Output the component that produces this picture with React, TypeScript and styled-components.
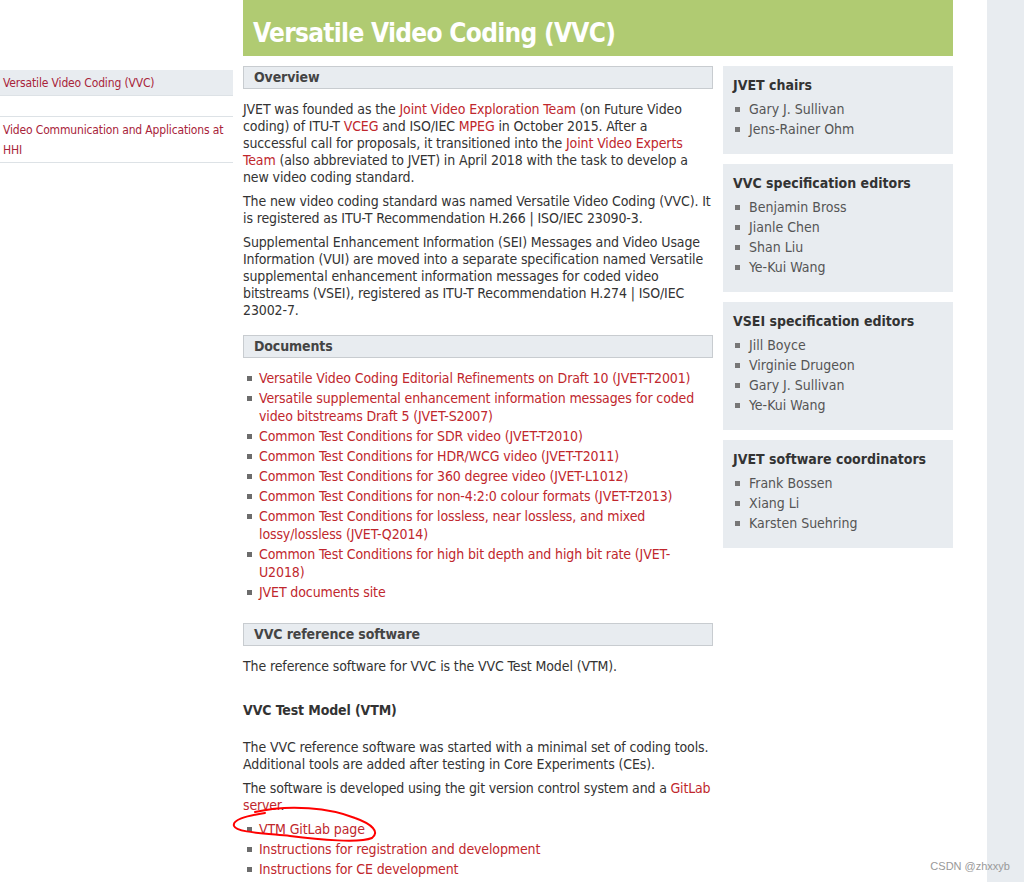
import React from "react";
import styled, { createGlobalStyle } from "styled-components";

const Global = createGlobalStyle`
  html, body { margin: 0; padding: 0; background: #fff; }
  body {
    font-family: "DejaVu Sans", Verdana, sans-serif;
    font-stretch: condensed;
    color: #333;
  }
`;

const Page = styled.div`
  position: relative;
  display: flex;
  width: 1024px;
  min-height: 882px;
  overflow: hidden;
`;

const LeftNav = styled.nav`
  width: 233px;
  margin-top: 70px;
  display: flex;
  flex-direction: column;
`;

const NavItem = styled.a<{ $active?: boolean; $gapTop?: number }>`
  display: block;
  font-size: 12px;
  line-height: 20px;
  letter-spacing: -0.15px;
  color: #a8243a;
  text-decoration: none;
  padding: 3px 3px 2px;
  background: ${(p) => (p.$active ? "#e8ecf0" : "transparent")};
  border-bottom: 1px solid #dde2e6;
  border-top: ${(p) => (p.$gapTop ? "1px solid #dde2e6" : "none")};
  margin-top: ${(p) => p.$gapTop || 0}px;
`;

const Main = styled.div`
  width: 710px;
  margin-left: 10px;
  display: flex;
  flex-direction: column;
`;

const Banner = styled.header`
  height: 56px;
  background: #b0cb72;
  display: flex;
  align-items: center;
  padding: 9px 10px 0;
  box-sizing: border-box;
`;

const Title = styled.h1`
  margin: 0;
  color: #fff;
  font-size: 26px;
  font-weight: bold;
  letter-spacing: -0.7px;
`;

const Columns = styled.div`
  display: flex;
  gap: 10px;
  margin-top: 10px;
`;

const Content = styled.div`
  width: 470px;
  display: flex;
  flex-direction: column;
  letter-spacing: -0.12px;
`;

const SectionHead = styled.h2<{ $top?: number }>`
  margin: ${(p) => p.$top || 0}px 0 0;
  height: 23px;
  box-sizing: border-box;
  background: #e8ecf0;
  border: 1px solid #c8ccd0;
  padding: 0 10px;
  font-size: 14px;
  line-height: 21px;
  font-weight: bold;
  color: #444;
`;

const Para = styled.p<{ $top?: number; $tight?: boolean }>`
  margin: ${(p) => p.$top ?? 7}px 0 0;
  font-size: 14px;
  line-height: 17px;
  color: #333;
  letter-spacing: ${(p) => (p.$tight ? "-0.17px" : "inherit")};
`;

const SubHead = styled.h3`
  margin: 27px 0 0;
  font-size: 14px;
  line-height: 17px;
  font-weight: bold;
  color: #333;
`;

const Link = styled.a`
  color: #c0272d;
  text-decoration: none;
`;

const List = styled.ul<{ $top?: number }>`
  list-style: none;
  margin: ${(p) => p.$top ?? 11}px 0 0;
  padding: 0;
`;

const Item = styled.li`
  position: relative;
  padding-left: 16px;
  font-size: 14px;
  line-height: 18px;
  margin-bottom: 2px;
  &::before {
    content: "";
    position: absolute;
    left: 4px;
    top: 7px;
    width: 5px;
    height: 5px;
    background: #6c6c6c;
  }
`;

const Sidebar = styled.aside`
  width: 230px;
  display: flex;
  flex-direction: column;
  gap: 10px;
`;

const Box = styled.section`
  background: #e8ecf0;
  padding: 9px 10px 15px;
`;

const BoxTitle = styled.h4`
  margin: 0 0 4px;
  font-size: 14px;
  line-height: 20px;
  font-weight: bold;
  color: #333;
`;

const PersonList = styled.ul`
  list-style: none;
  margin: 0;
  padding: 0;
`;

const Person = styled.li`
  position: relative;
  padding-left: 16px;
  font-size: 14px;
  line-height: 20px;
  color: #555;
  &::before {
    content: "";
    position: absolute;
    left: 2px;
    top: 8px;
    width: 5px;
    height: 5px;
    background: #777;
  }
`;

const Rail = styled.div`
  margin-left: auto;
  width: 37px;
  background: #e8ecf0;
`;

const Scribble = styled.svg`
  position: absolute;
  left: 230px;
  top: 800px;
  width: 155px;
  height: 50px;
  pointer-events: none;
`;

const Watermark = styled.div`
  position: absolute;
  right: 14px;
  bottom: 10px;
  font-family: "Liberation Sans", Arial, sans-serif;
  font-stretch: normal;
  font-size: 11px;
  color: #999;
`;

const boxes = [
  { title: "JVET chairs", people: ["Gary J. Sullivan", "Jens-Rainer Ohm"] },
  {
    title: "VVC specification editors",
    people: ["Benjamin Bross", "Jianle Chen", "Shan Liu", "Ye-Kui Wang"],
  },
  {
    title: "VSEI specification editors",
    people: ["Jill Boyce", "Virginie Drugeon", "Gary J. Sullivan", "Ye-Kui Wang"],
  },
  {
    title: "JVET software coordinators",
    people: ["Frank Bossen", "Xiang Li", "Karsten Suehring"],
  },
];

const docs = [
  "Versatile Video Coding Editorial Refinements on Draft 10 (JVET-T2001)",
  "Versatile supplemental enhancement information messages for coded video bitstreams Draft 5 (JVET-S2007)",
  "Common Test Conditions for SDR video (JVET-T2010)",
  "Common Test Conditions for HDR/WCG video (JVET-T2011)",
  "Common Test Conditions for 360 degree video (JVET-L1012)",
  "Common Test Conditions for non-4:2:0 colour formats (JVET-T2013)",
  "Common Test Conditions for lossless, near lossless, and mixed lossy/lossless (JVET-Q2014)",
  "Common Test Conditions for high bit depth and high bit rate (JVET-U2018)",
  "JVET documents site",
];

const vtmLinks = [
  "VTM GitLab page",
  "Instructions for registration and development",
  "Instructions for CE development",
];

export default function App() {
  return (
    <>
      <Global />
      <Page>
        <LeftNav>
          <NavItem $active href="#">Versatile Video Coding (VVC)</NavItem>
          <NavItem $gapTop={20} href="#">
            Video Communication and Applications at HHI
          </NavItem>
        </LeftNav>
        <Main>
          <Banner>
            <Title>Versatile Video Coding (VVC)</Title>
          </Banner>
          <Columns>
            <Content>
              <SectionHead>Overview</SectionHead>
              <Para $top={12}>
                JVET was founded as the <Link href="#">Joint Video Exploration Team</Link> (on
                Future Video coding) of ITU-T <Link href="#">VCEG</Link> and ISO/IEC{" "}
                <Link href="#">MPEG</Link> in October 2015. After a successful call for
                proposals, it transitioned into the{" "}
                <Link href="#">Joint Video Experts Team</Link> (also abbreviated to JVET) in
                April 2018 with the task to develop a new video coding standard.
              </Para>
              <Para>
                The new video coding standard was named Versatile Video Coding (VVC). It is
                registered as ITU-T Recommendation H.266 | ISO/IEC 23090-3.
              </Para>
              <Para>
                Supplemental Enhancement Information (SEI) Messages and Video Usage
                Information (VUI) are moved into a separate specification named Versatile
                supplemental enhancement information messages for coded video bitstreams
                (VSEI), registered as ITU-T Recommendation H.274 | ISO/IEC 23002-7.
              </Para>
              <SectionHead $top={16}>Documents</SectionHead>
              <List>
                {docs.map((d) => (
                  <Item key={d}>
                    <Link href="#">{d}</Link>
                  </Item>
                ))}
              </List>
              <SectionHead $top={20}>VVC reference software</SectionHead>
              <Para $top={12}>
                The reference software for VVC is the VVC Test Model (VTM).
              </Para>
              <SubHead>VVC Test Model (VTM)</SubHead>
              <Para $top={20}>
                The VVC reference software was started with a minimal set of coding tools.
                Additional tools are added after testing in Core Experiments (CEs).
              </Para>
              <Para $tight>
                The software is developed using the git version control system and a{" "}
                <Link href="#">GitLab server</Link>.
              </Para>
              <List $top={6}>
                {vtmLinks.map((d) => (
                  <Item key={d}>
                    <Link href="#">{d}</Link>
                  </Item>
                ))}
              </List>
            </Content>
            <Sidebar>
              {boxes.map((b) => (
                <Box key={b.title}>
                  <BoxTitle>{b.title}</BoxTitle>
                  <PersonList>
                    {b.people.map((p) => (
                      <Person key={p}>{p}</Person>
                    ))}
                  </PersonList>
                </Box>
              ))}
            </Sidebar>
          </Columns>
        </Main>
        <Rail />
        <Scribble viewBox="0 0 155 50">
          <path
            d="M25 12 C60 4,100 8,125 18 C142 24,150 32,142 38 C130 43,90 40,60 36 C30 33,6 32,4 26 C2 20,15 16,35 13"
            fill="none"
            stroke="#f00"
            strokeWidth="2"
            strokeLinecap="round"
          />
        </Scribble>
        <Watermark>CSDN @zhxxyb</Watermark>
      </Page>
    </>
  );
}
